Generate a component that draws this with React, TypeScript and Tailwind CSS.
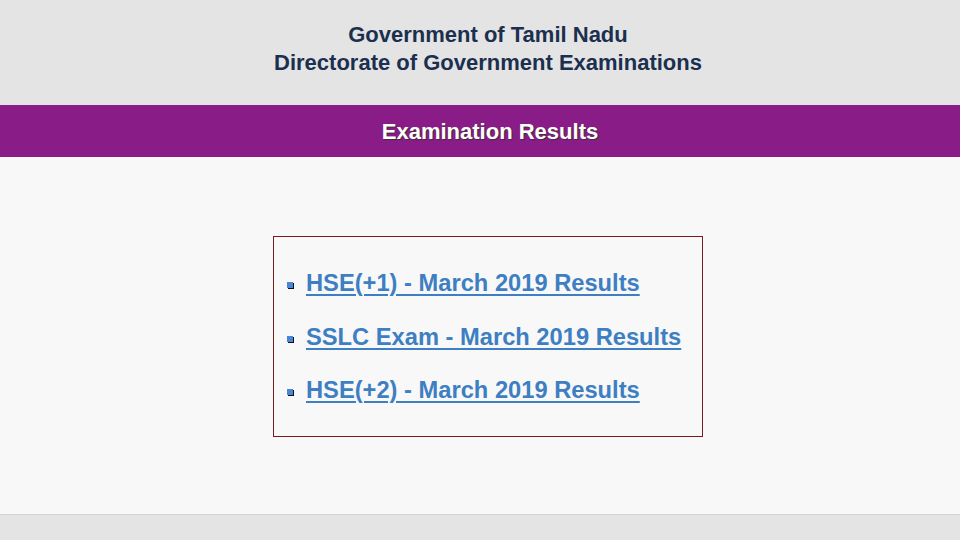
import React from "react";

const links = [
  "HSE(+1) - March 2019 Results",
  "SSLC Exam - March 2019 Results",
  "HSE(+2) - March 2019 Results",
];

function Bullet() {
  return (
    <span className="inline-block w-[6px] h-[6px] bg-[#4a86d8] shadow-[1px_1px_0_#111] mr-[13px] mt-[4px]" />
  );
}

export default function App() {
  return (
    <div className="w-[960px] h-[540px] flex flex-col bg-[#e4e4e4] overflow-hidden" style={{ fontFamily: '"Liberation Sans", Arial, sans-serif' }}>
      <div className="h-[105px] flex flex-col items-center justify-center pl-4 pb-[8px] text-[22px] leading-[28px] font-bold text-[#1b2f4f]">
        <div>Government of Tamil Nadu</div>
        <div>Directorate of Government Examinations</div>
      </div>
      <div className="h-[52px] bg-[#8a1c88] flex items-center justify-center pl-5 text-white font-bold text-[22px] [text-shadow:1px_1px_1px_#333]">
        Examination Results
      </div>
      <div className="h-[358px] bg-[#f8f8f8] border-b border-[#d4d4d4] flex justify-center pl-4 pt-[79px]">
        <div className="w-[430px] h-[201px] border border-[#7a1a1a] flex flex-col pl-[13px] pt-[32px] gap-[25.5px]">
          {links.map((l) => (
            <div key={l} className="flex items-center h-[28px]">
              <Bullet />
              <a href="#" className="text-[23.7px] leading-[28px] font-bold text-[#3d7fc2] underline decoration-[2px] underline-offset-[3px]">
                {l}
              </a>
            </div>
          ))}
        </div>
      </div>
      <div className="flex-1 bg-[#e4e4e4]" />
    </div>
  );
}
